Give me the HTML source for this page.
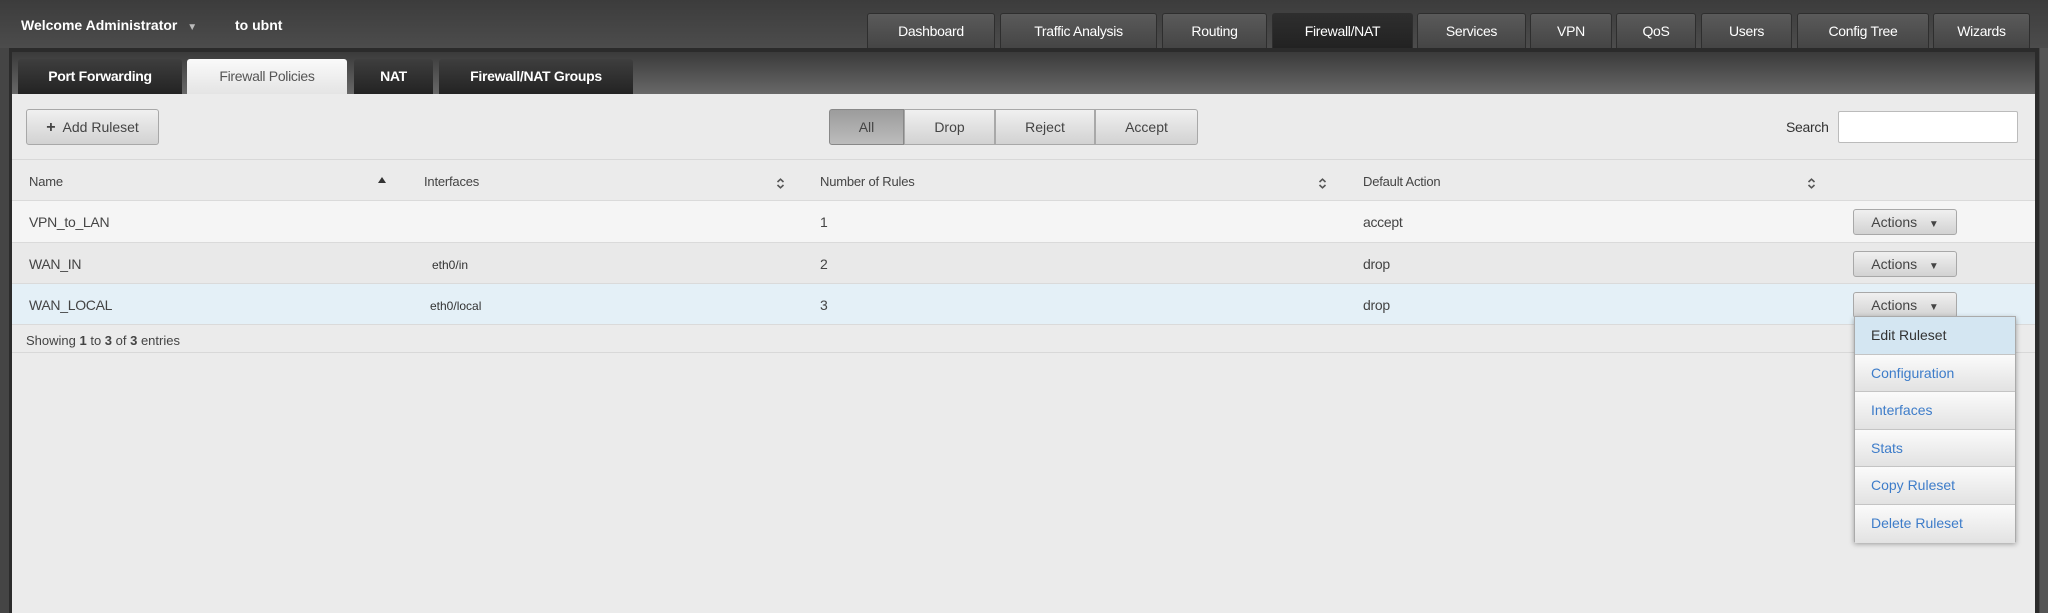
<!DOCTYPE html>
<html><head><meta charset="utf-8"><style>
*{box-sizing:border-box;margin:0;padding:0}
body{width:2048px;height:613px;overflow:hidden;background:#454545;font-family:"Liberation Sans",sans-serif;position:relative;color:#333}
.a{position:absolute}
.top{left:0;top:0;width:2048px;height:48px;background:linear-gradient(#3c3c3c,#4c4c4c)}
.tt{color:#fff;font-weight:bold;font-size:14px;top:17px}
.nt{top:13px;height:35px;background:linear-gradient(#5a5a5a,#454545);border:1px solid #2e2e2e;border-bottom:none;border-radius:3px 3px 0 0;color:#fff;font-size:14px;text-align:center;line-height:34px;letter-spacing:-0.3px}
.nt.on{background:linear-gradient(#2e2e2e,#222)}
.frame{left:9px;top:48px;width:2030px;height:565px;background:#2b2b2b}
.sub{left:12px;top:52px;width:2023px;height:42px;background:linear-gradient(#3a3a3a,#686868)}
.st{top:59px;height:35px;background:linear-gradient(#3e3e3e,#232323);border-radius:3px 3px 0 0;color:#fff;font-size:14px;font-weight:bold;text-align:center;line-height:35px;letter-spacing:-0.3px}
.st.on{background:linear-gradient(#fafafa,#e4e4e4);color:#555;font-weight:normal}
.content{left:12px;top:94px;width:2023px;height:519px;background:#ebebeb}
.btn{background:linear-gradient(#f0f0f0,#d2d2d2);border:1px solid #a8a8a8;border-radius:3px;font-size:14px;color:#444;text-align:center}
.hd{font-size:13px;color:#444;top:174px;letter-spacing:-0.2px}
.row{left:12px;width:2023px;border-bottom:1px solid #dadada}
.cell{font-size:14px;color:#444;letter-spacing:-0.3px}
.sm{font-size:12px;color:#333}
.dd{left:1854px;top:316px;width:162px;height:226px;border:1px solid #aaa;box-shadow:0 2px 5px rgba(0,0,0,.35);background:#eee}
.di{height:37.6px;border-bottom:1px solid #c4c4c4;background:linear-gradient(#fbfbfb,#e2e2e2);color:#3d7cc9;font-size:14px;padding-left:16px;line-height:36px}
.di.on{background:#d4e6f2;color:#333}
</style></head><body>
<div class="a top"></div>
<div class="a tt" style="left:21px">Welcome Administrator <span style="font-size:10px;color:#bbb;margin-left:6px">▼</span></div>
<div class="a tt" style="left:235px">to ubnt</div>
<div class="a nt" style="left:867px;width:128px">Dashboard</div>
<div class="a nt" style="left:1000px;width:157px">Traffic Analysis</div>
<div class="a nt" style="left:1162px;width:105px">Routing</div>
<div class="a nt on" style="left:1272px;width:141px">Firewall/NAT</div>
<div class="a nt" style="left:1417px;width:109px">Services</div>
<div class="a nt" style="left:1530px;width:82px">VPN</div>
<div class="a nt" style="left:1616px;width:80px">QoS</div>
<div class="a nt" style="left:1701px;width:91px">Users</div>
<div class="a nt" style="left:1797px;width:132px">Config Tree</div>
<div class="a nt" style="left:1933px;width:97px">Wizards</div>
<div class="a frame"></div>
<div class="a" style="left:2040px;top:48px;width:8px;height:565px;background:#555"></div>
<div class="a sub"></div>
<div class="a st" style="left:18px;width:164px">Port Forwarding</div>
<div class="a st on" style="left:187px;width:160px">Firewall Policies</div>
<div class="a st" style="left:354px;width:79px">NAT</div>
<div class="a st" style="left:439px;width:194px">Firewall/NAT Groups</div>
<div class="a content"></div>
<div class="a btn" style="left:26px;top:109px;width:133px;height:36px;line-height:34px"><b style="font-size:16px">+</b>&nbsp; Add Ruleset</div>
<div class="a btn" style="left:829px;top:109px;width:75px;height:36px;line-height:34px;background:linear-gradient(#9c9c9c,#bcbcbc);border-color:#888;border-radius:3px 0 0 3px">All</div>
<div class="a btn" style="left:904px;top:109px;width:91px;height:36px;line-height:34px;border-radius:0">Drop</div>
<div class="a btn" style="left:995px;top:109px;width:100px;height:36px;line-height:34px;border-radius:0">Reject</div>
<div class="a btn" style="left:1095px;top:109px;width:103px;height:36px;line-height:34px;border-radius:0 3px 3px 0">Accept</div>
<div class="a cell" style="left:1786px;top:119px;font-size:14px;color:#333">Search</div>
<div class="a" style="left:1838px;top:111px;width:180px;height:32px;background:#fff;border:1px solid #bbb;border-radius:2px"></div>
<div class="a" style="left:12px;top:159px;width:2023px;height:1px;background:#d8d8d8"></div>
<div class="a row" style="top:160px;height:41px;background:#ebebeb"></div>
<div class="a hd" style="left:29px">Name</div>
<svg class="a" style="left:377px;top:176px" width="10" height="8"><path d="M1 7 L5 1 L9 7Z" fill="#333"/></svg>
<div class="a hd" style="left:424px">Interfaces</div>
<svg class="a" style="left:776px;top:178px" width="9" height="11"><path d="M1.5 4 L4.5 1.2 L7.5 4 M1.5 7 L4.5 9.8 L7.5 7" stroke="#555" stroke-width="1.6" fill="none"/></svg>
<div class="a hd" style="left:820px">Number of Rules</div>
<svg class="a" style="left:1318px;top:178px" width="9" height="11"><path d="M1.5 4 L4.5 1.2 L7.5 4 M1.5 7 L4.5 9.8 L7.5 7" stroke="#555" stroke-width="1.6" fill="none"/></svg>
<div class="a hd" style="left:1363px">Default Action</div>
<svg class="a" style="left:1807px;top:178px" width="9" height="11"><path d="M1.5 4 L4.5 1.2 L7.5 4 M1.5 7 L4.5 9.8 L7.5 7" stroke="#555" stroke-width="1.6" fill="none"/></svg>
<div class="a row" style="top:201px;height:42px;background:#f5f5f5"></div>
<div class="a row" style="top:243px;height:41px;background:#e9e9e9"></div>
<div class="a row" style="top:284px;height:41px;background:#e4f0f7"></div>
<div class="a cell" style="left:29px;top:214px">VPN_to_LAN</div>
<div class="a cell" style="left:820px;top:214px">1</div>
<div class="a cell" style="left:1363px;top:214px">accept</div>
<div class="a cell" style="left:29px;top:256px">WAN_IN</div>
<div class="a sm" style="left:432px;top:258px">eth0/in</div>
<div class="a cell" style="left:820px;top:256px">2</div>
<div class="a cell" style="left:1363px;top:256px">drop</div>
<div class="a cell" style="left:29px;top:297px">WAN_LOCAL</div>
<div class="a sm" style="left:430px;top:299px">eth0/local</div>
<div class="a cell" style="left:820px;top:297px">3</div>
<div class="a cell" style="left:1363px;top:297px">drop</div>
<div class="a btn" style="left:1853px;top:209px;width:104px;height:26px;line-height:24px">Actions &nbsp;&nbsp;<span style="font-size:10px">▼</span></div>
<div class="a btn" style="left:1853px;top:251px;width:104px;height:26px;line-height:24px">Actions &nbsp;&nbsp;<span style="font-size:10px">▼</span></div>
<div class="a btn" style="left:1853px;top:292px;width:104px;height:26px;line-height:24px">Actions &nbsp;&nbsp;<span style="font-size:10px">▼</span></div>
<div class="a" style="left:26px;top:333px;font-size:13px;color:#444">Showing <b>1</b> to <b>3</b> of <b>3</b> entries</div>
<div class="a" style="left:12px;top:352px;width:2023px;height:1px;background:#d8d8d8"></div>
<div class="a dd">
<div class="di on">Edit Ruleset</div>
<div class="di">Configuration</div>
<div class="di">Interfaces</div>
<div class="di">Stats</div>
<div class="di">Copy Ruleset</div>
<div class="di" style="border-bottom:none">Delete Ruleset</div>
</div>
</body></html>
